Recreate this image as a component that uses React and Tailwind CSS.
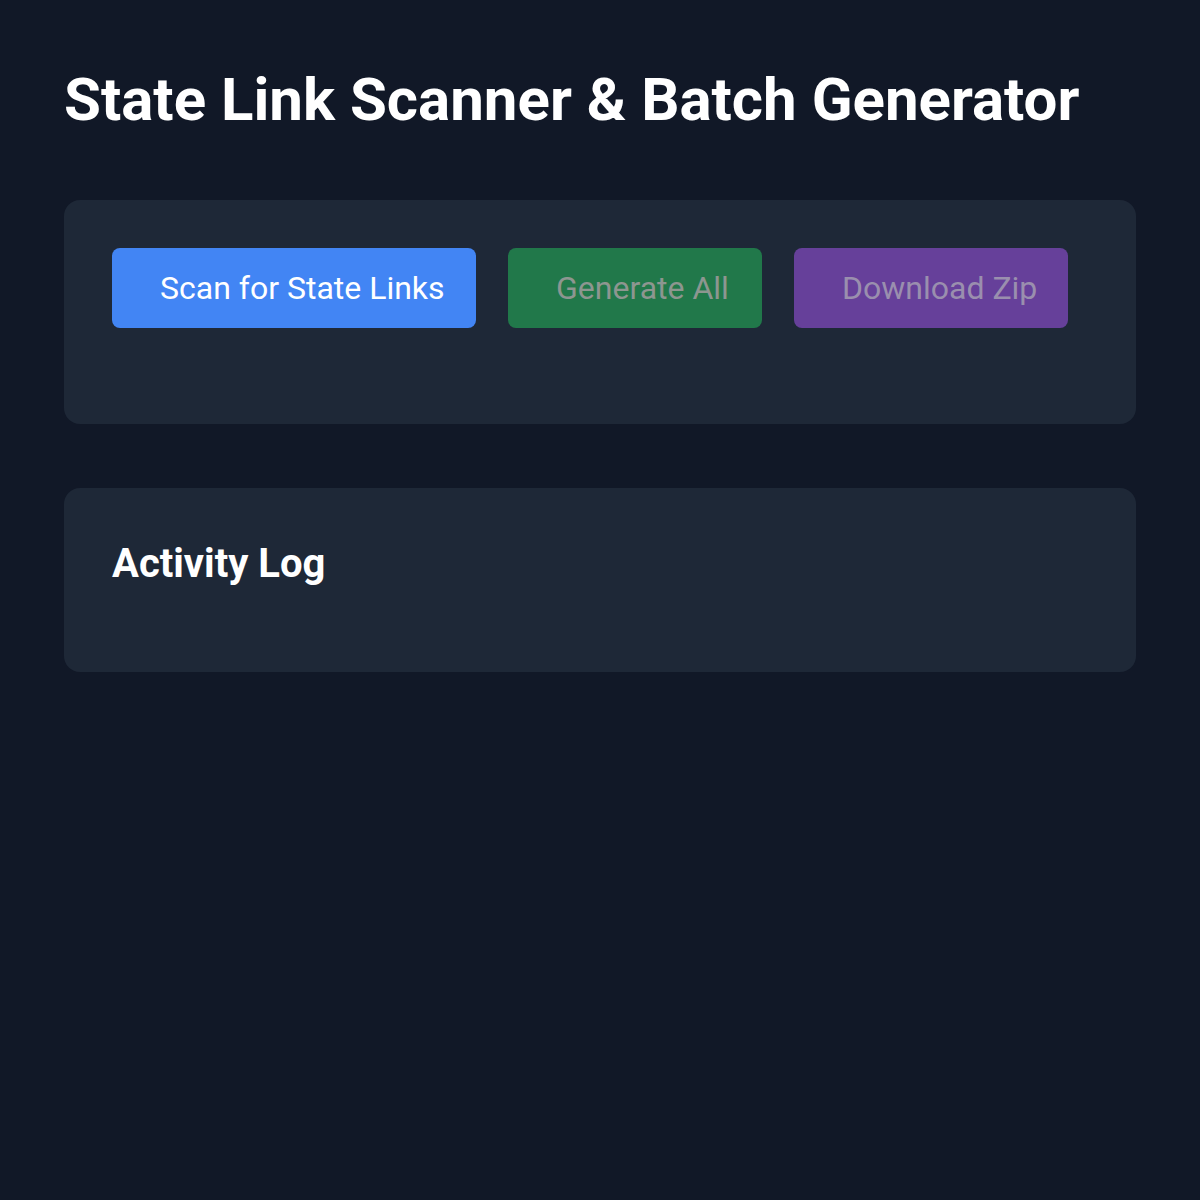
export default function App() {
  return (
    <div
      className="min-h-screen w-full bg-[#111827] p-16 text-white"
      style={{ fontFamily: "Roboto, 'Liberation Sans', sans-serif" }}
    >
      <h1 className="mb-16 text-[60px] font-bold leading-[72px]">
        State Link Scanner &amp; Batch Generator
      </h1>

      <div className="mb-16 rounded-2xl bg-[#1e2837] p-12 pb-24">
        <div className="flex gap-8">
          <button className="h-20 w-[364px] whitespace-nowrap rounded-lg bg-[#4285f4] pl-12 text-left text-[32px] text-white">
            Scan for State Links
          </button>
          <button className="h-20 w-[254px] whitespace-nowrap rounded-lg bg-[#21784a] pl-12 text-left text-[32px] text-[#8d9690]">
            Generate All
          </button>
          <button className="h-20 w-[274px] whitespace-nowrap rounded-lg bg-[#66409a] pl-12 text-left text-[32px] text-[#9a8fae]">
            Download Zip
          </button>
        </div>
      </div>

      <div className="rounded-2xl bg-[#1e2837] p-12">
        <h2 className="text-[40px] font-bold leading-[56px]">Activity Log</h2>
        <div className="h-8" />
      </div>
    </div>
  );
}
